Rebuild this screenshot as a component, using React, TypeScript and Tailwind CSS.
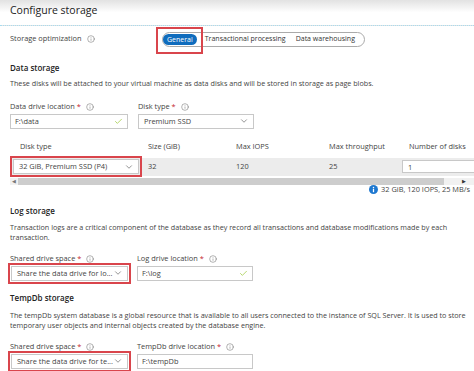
import { ChevronDown, Check, Info } from "lucide-react";

const font = { fontFamily: '"Open Sans", "Noto Sans", sans-serif' };

function InfoIcon() {
  return <Info size={8} strokeWidth={1.5} className="text-[#666] ml-[5px] inline-block" />;
}

function Label({ text }: { text: string }) {
  return (
    <div className="flex items-center h-[12px] text-[7.4px] text-[#444]">
      {text}
      <span className="text-[#c4262e] ml-[2px]">*</span>
      <InfoIcon />
    </div>
  );
}

function TextBox({ value, check, width = "w-[116px]" }: { value: string; check?: boolean; width?: string }) {
  return (
    <div className={`${width} h-[15px] border border-[#c8c8c8] bg-white flex items-center justify-between px-[4px] text-[7.4px] text-[#444]`}>
      <span>{value}</span>
      {check && <Check size={9} strokeWidth={1.5} className="text-[#7fba00]" />}
    </div>
  );
}

function Select({ value, red, width = "w-[116px]" }: { value: string; red?: boolean; width?: string }) {
  return (
    <div
      className={`${width} h-[15px] border border-[#c8c8c8] bg-white flex items-center justify-between pl-[5px] pr-[4px] text-[7.4px] text-[#444] ${
        red ? "outline-2 outline-[#d9454c] outline-offset-[1px]" : ""
      }`}
    >
      <span className="whitespace-nowrap">{value}</span>
      <ChevronDown size={10} strokeWidth={1.5} className="text-[#555]" />
    </div>
  );
}

function Heading({ text }: { text: string }) {
  return <div className="text-[8px] font-semibold text-[#222] h-[12px] leading-[12px]">{text}</div>;
}

export default function App() {
  return (
    <div style={font} className="w-[474px] h-[371px] overflow-hidden bg-white relative">
      {/* title */}
      <div className="h-[26px] bg-gradient-to-b from-[#e2e2e2] via-white to-white border-b border-dotted border-[#a9dcef] pl-[10px] pt-[3px]">
        <div className="text-[10.5px] text-[#222] leading-[14px]">Configure storage</div>
      </div>

      {/* optimization */}
      <div className="flex items-center h-[26px] pl-[10px]">
        <div className="w-[152px] flex items-center text-[7.4px] text-[#444]">
          Storage optimization
          <span className="ml-[5px]"><Info size={8} strokeWidth={1.5} className="text-[#666]" /></span>
        </div>
        <div className="flex items-center h-[15px] border border-[#aaa] rounded-full text-[7px] text-[#333] pr-[9px]">
          <div className="relative">
            <div className="bg-[#0f6cbd] text-white rounded-full px-[4px] h-[11px] leading-[11px]">General</div>
            <span className="absolute left-[-7px] right-[-6px] top-[-7px] bottom-[-9px] border-2 border-[#d9454c]" />
          </div>
          <div className="ml-[8px]">Transactional processing</div>
          <div className="ml-[10px]">Data warehousing</div>
        </div>
      </div>

      {/* data storage */}
      <div className="pl-[10px] mt-[10px]">
        <Heading text="Data storage" />
        <div className="text-[7.2px] text-[#444] mt-[4px] whitespace-nowrap">
          These disks will be attached to your virtual machine as data disks and will be stored in storage as page blobs.
        </div>
        <div className="flex gap-[10px] mt-[12px]">
          <div>
            <Label text="Data drive location" />
            <div className="mt-[1px]"><TextBox value="F:\data" check width="w-[118px]" /></div>
          </div>
          <div>
            <Label text="Disk type" />
            <div className="mt-[1px]"><Select value="Premium SSD" /></div>
          </div>
        </div>
      </div>

      {/* table */}
      <div className="ml-[10px] mt-[10px] text-[7.4px] text-[#444] w-[520px]">
        <div className="grid grid-cols-[138px_88px_86px_80px_1fr] h-[16px] items-center">
          <div className="pl-[10px]">Disk type</div>
          <div>Size (GiB)</div>
          <div>Max IOPS</div>
          <div className="pl-[7px]">Max throughput</div>
          <div className="pl-[7px]">Number of disks</div>
        </div>
        <div className="grid grid-cols-[138px_88px_86px_80px_1fr] h-[18px] items-center bg-[#ececec] mt-[3px]">
          <div className="pl-[3px]"><Select value="32 GiB, Premium SSD (P4)" red width="w-[126px]" /></div>
          <div>32</div>
          <div>120</div>
          <div className="pl-[7px]">25</div>
          <div>
            <div className="h-[13px] border border-[#c8c8c8] bg-white pl-[5px] leading-[12px]">1</div>
          </div>
        </div>
      </div>
      <div className="flex items-center h-[7px] mt-[2px] ml-[10px] bg-[#f1f1f1]">
        <span className="text-[5px] text-[#777] w-[8px] text-center">◀</span>
        <div className="h-[7px] w-[426px] bg-[#cdcdcd]" />
        <span className="text-[5px] text-[#333] ml-auto mr-[8px]">▶</span>
      </div>
      <div className="flex items-center justify-end pr-[4px] text-[7.4px] text-[#444] h-[10px]">
        <svg width="9" height="9" viewBox="0 0 10 10" className="mr-[3px]">
          <circle cx="5" cy="5" r="5" fill="#1e78d0" />
          <rect x="4.3" y="4.2" width="1.4" height="3.8" fill="#fff" />
          <circle cx="5" cy="2.8" r="0.8" fill="#fff" />
        </svg>
        32 GiB, 120 IOPS, 25 MB/s
      </div>

      {/* log storage */}
      <div className="pl-[10px] mt-[10px]">
        <Heading text="Log storage" />
        <div className="text-[7.2px] text-[#444] mt-[5px] leading-[10px] whitespace-nowrap">
          Transaction logs are a critical component of the database as they record all transactions and database modifications made by each
          <br />
          transaction.
        </div>
        <div className="flex gap-[9px] mt-[11px]">
          <div>
            <Label text="Shared drive space" />
            <div className="mt-[1px] ml-[1px]"><Select value="Share the data drive for lo..." red width="w-[117px]" /></div>
          </div>
          <div>
            <Label text="Log drive location" />
            <div className="mt-[1px]"><TextBox value="F:\log" check /></div>
          </div>
        </div>
      </div>

      {/* tempdb storage */}
      <div className="pl-[10px] mt-[11px]">
        <Heading text="TempDb storage" />
        <div className="text-[7.2px] text-[#444] mt-[6px] leading-[10px] whitespace-nowrap">
          The tempDb system database is a global resource that is available to all users connected to the instance of SQL Server. It is used to store
          <br />
          temporary user objects and internal objects created by the database engine.
        </div>
        <div className="flex gap-[9px] mt-[11px]">
          <div>
            <Label text="Shared drive space" />
            <div className="mt-[1px] ml-[1px]"><Select value="Share the data drive for te..." red width="w-[117px]" /></div>
          </div>
          <div>
            <Label text="TempDb drive location" />
            <div className="mt-[1px]"><TextBox value="F:\tempDb" /></div>
          </div>
        </div>
      </div>
    </div>
  );
}
